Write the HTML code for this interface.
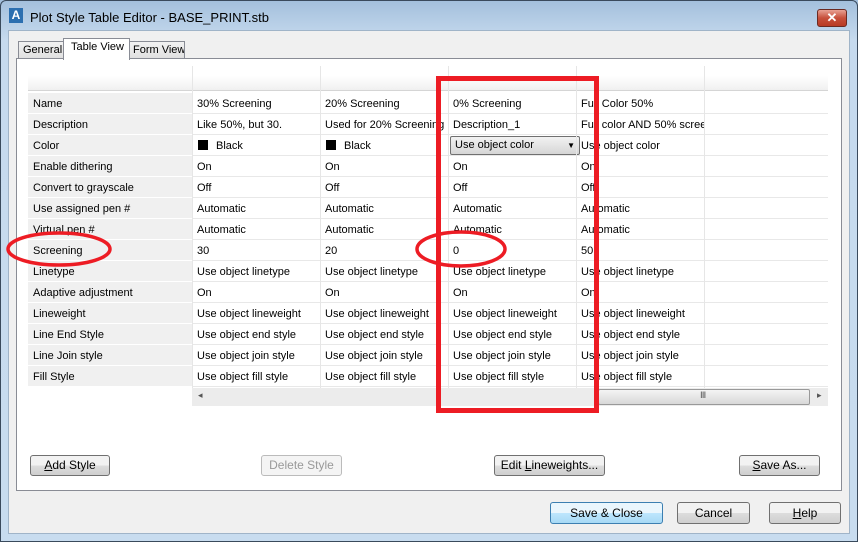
<!DOCTYPE html><html><head><style>
*{margin:0;padding:0;box-sizing:border-box}
body{width:858px;height:542px;overflow:hidden;background:linear-gradient(#a3bfdc,#c6daee 40px,#c8dcef);font-family:"Liberation Sans",sans-serif;font-size:11px;color:#000;position:relative}
.abs{position:absolute}
.btn{position:absolute;border:1px solid #707070;border-radius:3px;background:linear-gradient(#f2f2f2 50%,#dddddd 50%,#cfcfcf);text-align:center;font-size:12px;line-height:19px}
.cell{position:absolute;height:21px;line-height:21px;padding-left:5px;white-space:nowrap;overflow:hidden;font-size:11px}
.tab{position:absolute;border:1px solid #898c95;background:linear-gradient(#f2f2f2,#e0e0e0);font-size:11px;line-height:16px;white-space:nowrap;overflow:hidden}
</style></head><body>
<div class="abs" style="left:0;top:0;width:858px;height:542px;border:1px solid #3a4a5c;border-radius:6px 6px 0 0"></div>
<div class="abs" style="left:9px;top:8px;width:14px;height:15px;background:#2c6fb0;color:#fff;font-weight:bold;font-size:12px;text-align:center;line-height:15px">A</div>
<div class="abs" style="left:30px;top:10px;font-size:13px">Plot Style Table Editor - BASE_PRINT.stb</div>
<div class="abs" style="left:817px;top:9px;width:30px;height:18px;border:1px solid #6b2a22;border-radius:3px;background:linear-gradient(#e8a193,#c7503b 50%,#b83a24);color:#fff;font-weight:bold;text-align:center;line-height:16px;font-size:13px">✕</div>
<div class="abs" style="left:8px;top:30px;width:842px;height:504px;background:#f0f0f0;border:1px solid #a0b4c8"></div>
<div class="tab" style="left:18px;top:41px;width:46px;height:18px;padding-left:4px">General</div>
<div class="tab" style="left:129px;top:41px;width:56px;height:18px;padding-left:3px">Form View</div>
<div class="abs" style="left:16px;top:58px;width:826px;height:433px;background:#fff;border:1px solid #898c95"></div>
<div class="abs" style="left:63px;top:38px;width:67px;height:22px;border:1px solid #898c95;border-bottom:none;background:#fff;font-size:11px;padding-left:7px;line-height:17px;white-space:nowrap">Table View</div>
<div class="abs" style="left:28px;top:76px;width:800px;height:15px;background:linear-gradient(#fff,#f0f0f0);border-bottom:1px solid #d5d5d5"></div>
<div id="t"></div>
<div class="abs" style="left:192px;top:388px;width:636px;height:18px;background:#ececec"></div>
<div class="abs" style="left:198px;top:390px;font-size:9px;color:#555">◂</div>
<div class="abs" style="left:598px;top:389px;width:212px;height:16px;border:1px solid #999;border-radius:2px;background:linear-gradient(#f4f4f4,#d8d8d8)"></div>
<div class="abs" style="left:700px;top:390px;font-size:9px;color:#555">Ⅲ</div>
<div class="abs" style="left:817px;top:390px;font-size:9px;color:#555">▸</div>
<div class="btn" style="left:30px;top:455px;width:80px;height:21px"><u>A</u>dd Style</div>
<div class="btn" style="left:261px;top:455px;width:81px;height:21px;color:#999;border-color:#bbb;background:#f4f4f4">Delete Style</div>
<div class="btn" style="left:494px;top:455px;width:111px;height:21px">Edit <u>L</u>ineweights...</div>
<div class="btn" style="left:739px;top:455px;width:81px;height:21px"><u>S</u>ave As...</div>
<div class="btn" style="left:550px;top:502px;width:113px;height:22px;border-color:#3c7fb1;background:linear-gradient(#eaf6fd 50%,#bee6fd 50%,#a7d9f5);line-height:20px">Save &amp; Close</div>
<div class="btn" style="left:677px;top:502px;width:73px;height:22px;line-height:20px">Cancel</div>
<div class="btn" style="left:769px;top:502px;width:72px;height:22px;line-height:20px"><u>H</u>elp</div>
<div class="abs" style="left:436px;top:76px;width:163px;height:337px;border:5px solid #ed1c24"></div>
<svg class="abs" style="left:0;top:0" width="858" height="542"><ellipse cx="59" cy="249" rx="51" ry="16" fill="none" stroke="#ed1c24" stroke-width="3.5"/><ellipse cx="461" cy="249" rx="44" ry="17" fill="none" stroke="#ed1c24" stroke-width="3.5"/></svg>
<script>
var L=["Name","Description","Color","Enable dithering","Convert to grayscale","Use assigned pen #","Virtual pen #","Screening","Linetype","Adaptive adjustment","Lineweight","Line End Style","Line Join style","Fill Style"];
var C=[["30% Screening","Like 50%, but 30.","■","On","Off","Automatic","Automatic","30","Use object linetype","On","Use object lineweight","Use object end style","Use object join style","Use object fill style"],
["20% Screening","Used for 20% Screening","■","On","Off","Automatic","Automatic","20","Use object linetype","On","Use object lineweight","Use object end style","Use object join style","Use object fill style"],
["0% Screening","Description_1","DD","On","Off","Automatic","Automatic","0","Use object linetype","On","Use object lineweight","Use object end style","Use object join style","Use object fill style"],
["Full Color 50%","Full color AND 50% screening","Use object color","On","Off","Automatic","Automatic","50","Use object linetype","On","Use object lineweight","Use object end style","Use object join style","Use object fill style"]];
var h="",X=[192,320,448,576];
for(var i=0;i<14;i++){var y=93+21*i;
h+='<div class="cell" style="left:28px;top:'+y+'px;width:164px;background:#f0f0f0;border-bottom:1px solid #fff;height:21px;line-height:22px">'+L[i]+'</div>';
h+='<div class="abs" style="left:192px;top:'+(y+20)+'px;width:636px;height:1px;background:#e8e8e8"></div>';
for(var j=0;j<4;j++){var v=C[j][i];
if(v=="■")v='<span style="display:inline-block;width:10px;height:10px;background:#000;vertical-align:-1px;margin:0 8px 0 1px"></span>Black';
if(v=="DD"){h+='<div class="abs" style="left:450px;top:'+(y+1)+'px;width:130px;height:19px;border:1px solid #707070;border-radius:2px;background:linear-gradient(#f2f2f2,#d6d6d6);padding-left:4px;line-height:17px">Use object color<span style="position:absolute;right:4px;font-size:8px">▼</span></div>';continue;}
h+='<div class="cell" style="left:'+X[j]+'px;top:'+(y+1)+'px;width:128px">'+v+'</div>';}}
[192,320,448,576,704].forEach(function(x){h+='<div class="abs" style="left:'+x+'px;top:66px;width:1px;height:322px;background:#e6e6e6"></div>'});
document.getElementById("t").innerHTML=h;
</script>
</body></html>
